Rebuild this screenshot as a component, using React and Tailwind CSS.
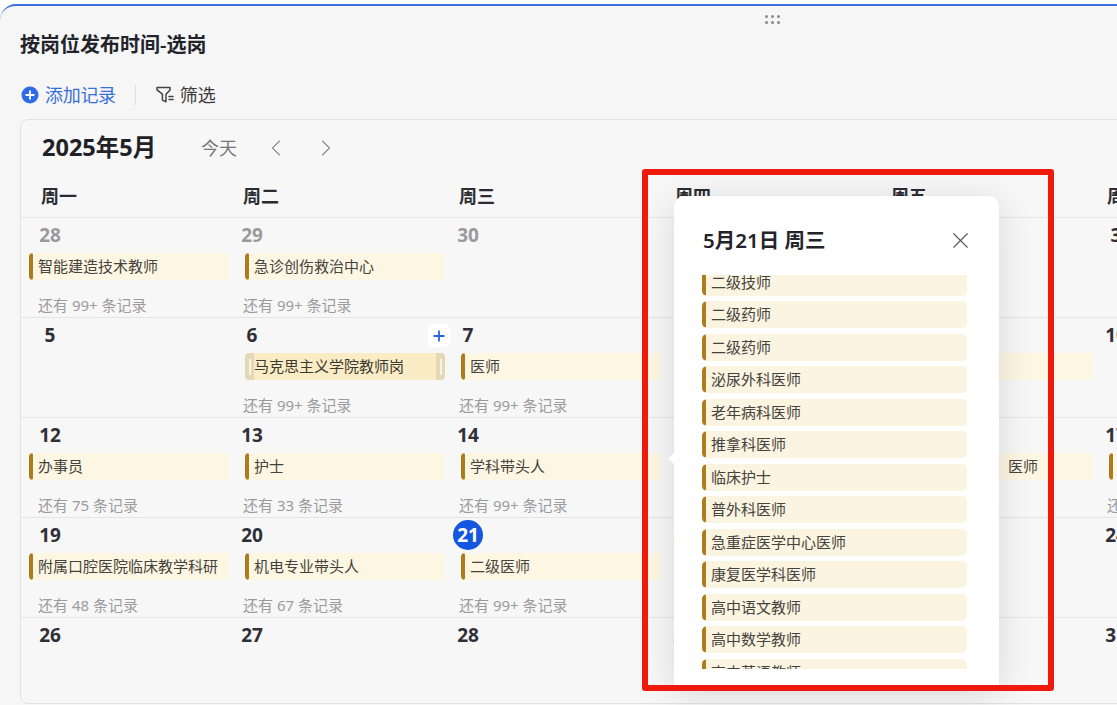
import { ChevronLeft, ChevronRight, X } from "lucide-react"

const weekdays = ["周一", "周二", "周三", "周四", "周五", "周六", "周日"]

const weeks = [
  [
    { day: 28, muted: true, event: "智能建造技术教师", more: "99+" },
    { day: 29, muted: true, event: "急诊创伤救治中心", more: "99+" },
    { day: 30, muted: true },
    { day: 1 },
    { day: 2 },
    { day: 3 },
    { day: 4 },
  ],
  [
    { day: 5 },
    { day: 6, event: "马克思主义学院教师岗", more: "99+", hover: true },
    { day: 7, event: "医师", more: "99+" },
    { day: 8 },
    { day: 9, event: " ", more: "99+" },
    { day: 10 },
    { day: 11 },
  ],
  [
    { day: 12, event: "办事员", more: "75" },
    { day: 13, event: "护士", more: "33" },
    { day: 14, event: "学科带头人", more: "99+" },
    { day: 15 },
    { day: 16, event: "医师", more: "99+", indent: true },
    { day: 17, event: " ", more: "99+" },
    { day: 18 },
  ],
  [
    { day: 19, event: "附属口腔医院临床教学科研", more: "48" },
    { day: 20, event: "机电专业带头人", more: "67" },
    { day: 21, today: true, event: "二级医师", more: "99+" },
    { day: 22 },
    { day: 23 },
    { day: 24 },
    { day: 25 },
  ],
  [
    { day: 26 },
    { day: 27 },
    { day: 28 },
    { day: 29 },
    { day: 30 },
    { day: 31 },
    { day: 1 },
  ],
]

const popupItems = [
  "二级技师",
  "二级药师",
  "二级药师",
  "泌尿外科医师",
  "老年病科医师",
  "推拿科医师",
  "临床护士",
  "普外科医师",
  "急重症医学中心医师",
  "康复医学科医师",
  "高中语文教师",
  "高中数学教师",
  "高中英语教师",
]

function FilterIcon() {
  return (
    <svg width="18" height="18" viewBox="0 0 18 18" fill="none" stroke="#444" strokeWidth="1.5" strokeLinejoin="round" strokeLinecap="round">
      <path d="M1 1.5h13v2.4L10 8.2v7.6l-3.6-1.7V8.2L1 3.9z" />
      <path d="M13 10.5h4M13 13.5h4" />
    </svg>
  )
}

function EventBar({ label, hover, indent }) {
  if (hover) {
    return (
      <div className="ml-2 flex h-[27px] w-[200px] items-center overflow-hidden rounded-[4px] bg-[#faecc4] text-[15px] text-[#3d3a32]">
        <span className="flex h-full w-[9px] shrink-0 items-center justify-center bg-[#e4d9b6]">
          <span className="h-[16px] w-[2px] bg-[#f7f3e6]" />
        </span>
        <span className="flex-1 truncate">{label}</span>
        <span className="flex h-full w-[9px] shrink-0 items-center justify-center bg-[#e4d9b6]">
          <span className="h-[16px] w-[2px] bg-[#f7f3e6]" />
        </span>
      </div>
    )
  }
  return (
    <div className="ml-2 flex h-[27px] w-[200px] items-center overflow-hidden rounded-[4px] bg-[#fdf6e2] text-[15px] text-[#45433d]">
      <span className="h-full w-[4px] shrink-0 rounded-[3px] bg-[#ae7d1b]" />
      <span className={indent ? "truncate pl-[111px]" : "truncate pl-[5px]"}>{label}</span>
    </div>
  )
}

function DayCell({ cell, first }) {
  return (
    <div className="flex h-full flex-col pt-1">
      <div className={first ? "flex h-[26px] w-[22px] items-center justify-center ml-[18px]" : "flex h-[26px] w-[22px] items-center justify-center ml-1"}>
        {cell.today ? (
          <span className="flex h-[30px] w-[30px] shrink-0 items-center justify-center rounded-full bg-[#1456e0] text-[19px] font-bold text-white">
            {cell.day}
          </span>
        ) : (
          <span className={cell.muted ? "text-[19px] font-bold text-[#9a9a9c]" : "text-[19px] font-bold text-[#2f3035]"}>
            {cell.day}
          </span>
        )}
      </div>
      {cell.event && (
        <div className="mt-[5px]">
          <EventBar label={cell.event} hover={cell.hover} indent={cell.indent} />
        </div>
      )}
      {cell.more && (
        <div className={first ? "mt-[15px] ml-[17px] h-5 text-[15px] leading-5 text-[#9b9b9d]" : "mt-[15px] ml-[6px] h-5 text-[15px] leading-5 text-[#9b9b9d]"}>
          还有 {cell.more} 条记录
        </div>
      )}
    </div>
  )
}

export default function App() {
  return (
    <div className="relative h-[705px] w-[1117px] overflow-hidden bg-white [font-family:'Noto_Sans','Noto_Sans_CJK_SC',sans-serif]">
      <div className="mt-1 h-[701px] w-[1400px] rounded-tl-[16px] border-t-2 border-[#3a70e0] bg-[#f6f6f7] pl-5 pt-[25px]">
        {/* drag handle */}
        <div className="absolute left-[765px] top-[15px] grid grid-cols-3 gap-x-[3px] gap-y-[3px]">
          {[0, 1, 2, 3, 4, 5].map((i) => (
            <span key={i} className="h-[3px] w-[3px] rounded-full bg-[#8a8a8c]" />
          ))}
        </div>

        <h1 className="h-7 text-[20px] font-semibold leading-7 text-[#22242a]">按岗位发布时间-选岗</h1>

        <div className="mt-6 flex h-6 items-center">
          <svg width="18" height="18" viewBox="0 0 18 18" className="ml-px">
            <circle cx="9" cy="9" r="8.5" fill="#2f6be6" />
            <path d="M9 5.2v7.6M5.2 9h7.6" stroke="#fff" strokeWidth="1.8" strokeLinecap="round" />
          </svg>
          <span className="ml-[6px] text-[18px] tracking-[-0.3px] text-[#3a6fd8]">添加记录</span>
          <span className="ml-[19px] h-5 w-px bg-[#dcdcde]" />
          <span className="ml-5">
            <FilterIcon />
          </span>
          <span className="ml-[6px] text-[18px] text-[#3a3a3c]">筛选</span>
        </div>

        <div className="mt-3 h-[585px] rounded-[8px] border border-[#e2e2e4] bg-[#f7f7f8]">
          <div className="flex h-14 items-center">
            <span className="ml-[21px] w-[159px] text-[23.5px] font-bold text-[#1f2126]">2025年5月</span>
            <span className="text-[18px] text-[#77777a]">今天</span>
            <ChevronLeft size={28} strokeWidth={0.9} className="ml-[25px] text-[#66666a]" />
            <ChevronRight size={28} strokeWidth={0.9} className="ml-[22px] text-[#66666a]" />
          </div>

          <div className="grid h-[41px] grid-cols-[repeat(7,216px)] items-center">
            {weekdays.map((name, i) => (
              <div key={name} className={i === 0 ? "pl-5 text-[18px] font-semibold text-[#2b2c30]" : "pl-[6px] text-[18px] font-semibold text-[#2b2c30]"}>
                {name}
              </div>
            ))}
          </div>

          {weeks.map((week, w) => (
            <div key={w} className="grid h-[100px] grid-cols-[repeat(7,216px)] border-t border-[#e4e4e6]">
              {week.map((cell, i) => (
                <DayCell key={i} cell={cell} first={i === 0} />
              ))}
            </div>
          ))}
        </div>
      </div>

      {/* + button on hovered cell */}
      <div className="absolute left-[428px] top-[324px] flex h-[23px] w-[22px] items-center justify-center rounded-[5px] bg-white">
        <svg width="12" height="12" viewBox="0 0 12 12">
          <path d="M6 .5v11M.5 6h11" stroke="#2f62d8" strokeWidth="1.8" />
        </svg>
      </div>

      {/* day popup */}
      <div className="absolute left-[674px] top-[196px] h-[492px] w-[325px] rounded-t-[10px] bg-white shadow-[0_6px_36px_rgba(0,0,0,0.13)]">
        <span className="absolute -left-[4px] top-[258px] h-[9px] w-[9px] rotate-45 bg-white" />
        <div className="flex h-[79px] items-center justify-between pl-[29px] pr-[25px] pt-[10px]">
          <span className="text-[20.5px] font-semibold text-[#22242a]">5月21日 周三</span>
          <X size={27} strokeWidth={0.95} className="text-[#555558]" />
        </div>
        <div className="ml-7 mr-8 h-[394px] overflow-hidden">
          <div className="-mt-[6.5px] flex flex-col gap-[5.5px]">
            {popupItems.map((item, i) => (
              <div key={i} className="flex h-[27px] shrink-0 items-center overflow-hidden rounded-[5px] bg-[#fbf4e1] text-[15px] text-[#45433d]">
                <span className="h-full w-[4px] shrink-0 rounded-[3px] bg-[#ae7d1b]" />
                <span className="pl-[5px]">{item}</span>
              </div>
            ))}
          </div>
        </div>
      </div>

      {/* red annotation frame */}
      <div className="absolute left-[642px] top-[169px] h-[522px] w-[412px] rounded-[3px] border-[6px] border-[#ef1a0b]" />
    </div>
  )
}
